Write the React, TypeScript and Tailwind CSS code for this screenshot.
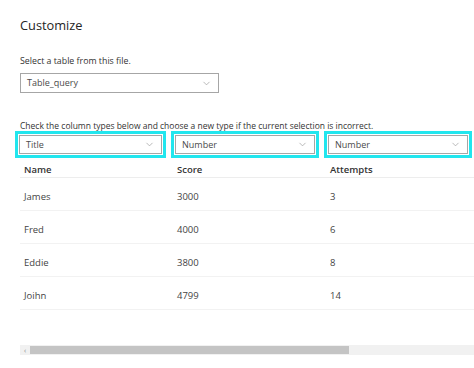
import { ChevronDown } from 'lucide-react';

const TYPES = ['Title', 'Number', 'Number'];
const COLUMNS = ['Name', 'Score', 'Attempts'];
const ROWS = [
  ['James', '3000', '3'],
  ['Fred', '4000', '6'],
  ['Eddie', '3800', '8'],
  ['Joihn', '4799', '14'],
];

function Dropdown({ value, className }: { value: string; className: string }) {
  return (
    <div className={`flex items-center justify-between border border-[#a6a6a6] bg-white pl-[6px] pr-[6px] ${className}`}>
      <span className="text-[9px] text-[#4a4a4a]">{value}</span>
      <ChevronDown className="w-[11px] h-[11px] text-[#9a9a9a]" strokeWidth={1.5} />
    </div>
  );
}

export default function App() {
  return (
    <div
      className="w-[474px] h-[368px] bg-white overflow-hidden pl-5 text-[#333]"
      style={{ fontFamily: '"Open Sans", "Noto Sans", sans-serif' }}
    >
      {/* Title */}
      <div className="pt-[14px] h-[55px] text-[12.8px] font-medium text-[#252525] leading-[22px]">Customize</div>

      {/* Table picker */}
      <div className="text-[8.8px] leading-[12px] text-[#333]">Select a table from this file.</div>
      <Dropdown value="Table_query" className="mt-[6px] w-[199px] h-[20px]" />

      {/* Column types */}
      <div className="mt-[27px] text-[8.5px] leading-[12px] text-[#333]">
        Check the column types below and choose a new type if the current selection is incorrect.
      </div>
      <div className="flex gap-[5px] -ml-[5px] mt-[-1px]">
        {TYPES.map((t, i) => (
          <div
            key={i}
            className={`border-[3px] border-[#22e6ee] h-[27px] p-[1px] ${i === 0 ? 'w-[151px]' : 'w-[148px]'}`}
          >
            <Dropdown value={t} className="w-full h-full" />
          </div>
        ))}
      </div>

      {/* Table */}
      <div>
        <div className="grid grid-cols-[153px_153px_1fr] h-[20px] pt-[5px] items-center border-b border-[#ededed] text-[9.5px] font-semibold text-[#333]">
          {COLUMNS.map(c => (
            <span key={c} className="pl-[4px]">{c}</span>
          ))}
        </div>
        {ROWS.map((r, i) => (
          <div
            key={i}
            className="grid grid-cols-[153px_153px_1fr] h-[33px] pt-[6px] items-center border-b border-[#f2f2f2] text-[9.5px] text-[#444]"
          >
            {r.map((v, j) => (
              <span key={j} className="pl-[4px]">{v}</span>
            ))}
          </div>
        ))}
      </div>

      {/* Horizontal scrollbar */}
      <div className="mt-[35px] h-[10px] flex items-center bg-[#f1f1f1]">
        <span className="w-[10px] flex justify-center text-[7px] leading-none text-[#888]">‹</span>
        <div className="w-[319px] h-[8px] bg-[#c4c4c4]" />
      </div>
    </div>
  );
}
